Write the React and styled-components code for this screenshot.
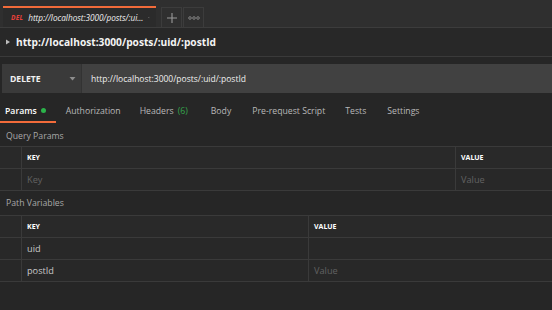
import React from 'react';
import styled, { createGlobalStyle } from 'styled-components';

const GlobalStyle = createGlobalStyle`
  html, body {
    margin: 0;
    padding: 0;
    background: #262626;
    font-family: "Open Sans", "Liberation Sans", sans-serif;
    overflow: hidden;
  }
`;

const Page = styled.div`
  width: 552px;
  height: 310px;
  background: #262626;
  color: #d8d8d8;
`;

const TabBar = styled.div`
  display: flex;
  align-items: flex-end;
  height: 28px;
  padding-left: 3px;
  background: #2f2f2f;
  border-bottom: 1px solid #3c3c3c;
  box-sizing: border-box;
`;

const ActiveTab = styled.div`
  display: flex;
  align-items: center;
  width: 153px;
  height: 21px;
  box-sizing: border-box;
  border-top: 2px solid #f26b3a;
  background: #2b2b2b;
  padding: 0 6px 0 8px;
  gap: 5px;
`;

const MethodBadge = styled.span`
  color: #e8403a;
  font-size: 6.5px;
  font-weight: 700;
  font-style: italic;
  letter-spacing: 0.3px;
`;

const TabTitle = styled.span`
  flex: 1;
  color: #f0f0f0;
  font-size: 8.2px;
  font-style: italic;
  white-space: nowrap;
`;

const TabButton = styled.div`
  display: flex;
  align-items: center;
  justify-content: center;
  width: 21px;
  height: 20px;
  margin-left: ${(p) => p.gap}px;
  border: 1px solid #3c3c3c;
  border-bottom: none;
  box-sizing: border-box;
  color: #9a9a9a;
`;

const UrlHeader = styled.div`
  display: flex;
  align-items: center;
  gap: 5px;
  height: 29px;
  padding-left: 5px;
  border-bottom: 1px solid #3a3a3a;
  box-sizing: border-box;
  background: #282828;
`;

const UrlHeading = styled.span`
  color: #f4f4f4;
  font-size: 10.2px;
  font-weight: 700;
`;

const RequestBar = styled.div`
  display: flex;
  height: 29px;
  margin: 7px 0 0 2px;
`;

const MethodSelect = styled.div`
  display: flex;
  align-items: center;
  justify-content: space-between;
  width: 80px;
  padding: 0 5px 0 8px;
  box-sizing: border-box;
  background: #3a3a3a;
  border-right: 1px solid #333;
  color: #f0f0f0;
  font-size: 8.6px;
  font-weight: 700;
`;

const UrlInput = styled.div`
  flex: 1;
  display: flex;
  align-items: center;
  padding-left: 9px;
  background: #414141;
  color: #efefef;
  font-size: 8.5px;
`;

const ReqTabs = styled.div`
  display: flex;
  height: 23px;
  margin-top: 7px;
`;

const ReqTab = styled.div`
  display: flex;
  align-items: center;
  gap: 4px;
  padding: 0 ${(p) => p.pr}px 0 ${(p) => p.pl}px;
  font-size: 8.7px;
  color: ${(p) => (p.active ? '#ffffff' : '#b8b8b8')};
  font-weight: ${(p) => (p.active ? 600 : 400)};
  border-bottom: 2px solid ${(p) => (p.active ? '#f26b3a' : 'transparent')};
  box-sizing: border-box;
`;

const Dot = styled.span`
  width: 5px;
  height: 5px;
  border-radius: 50%;
  background: #2bb34a;
`;

const Count = styled.span`
  color: #35a74d;
`;

const SectionTitle = styled.div`
  height: ${(p) => p.h}px;
  display: flex;
  align-items: center;
  padding: ${(p) => p.pt}px 0 0 6px;
  box-sizing: border-box;
  font-size: 8.7px;
  color: #a8a8a8;
`;

const Table = styled.div`
  display: grid;
  grid-template-columns: 22px ${(p) => p.keyWidth}px 1fr;
  border-top: 1px solid #3a3a3a;
`;

const Cell = styled.div`
  height: 21px;
  display: flex;
  align-items: center;
  padding-left: 5px;
  border-bottom: 1px solid #3a3a3a;
  border-right: ${(p) => (p.last ? 'none' : '1px solid #3a3a3a')};
  font-size: ${(p) => (p.head ? '7px' : '9.2px')};
  font-weight: ${(p) => (p.head ? 700 : 400)};
  color: ${(p) => (p.head ? '#ffffff' : p.muted ? '#626262' : '#c8c8c8')};
  background: ${(p) => (p.head ? '#292929' : '#282828')};
`;

const Caret = () => (
  <svg width="6" height="6" viewBox="0 0 6 6">
    <path d="M1 0.5 L5 3 L1 5.5 Z" fill="#bdbdbd" />
  </svg>
);

const DownCaret = () => (
  <svg width="7" height="5" viewBox="0 0 7 5">
    <path d="M0.5 1 L6.5 1 L3.5 4.5 Z" fill="#8d8d8d" />
  </svg>
);

const Close = () => (
  <svg width="9" height="9" viewBox="0 0 9 9">
    <path d="M1 1 L8 8 M8 1 L1 8" stroke="#c8c8c8" strokeWidth="1.1" />
  </svg>
);

const Plus = () => (
  <svg width="10" height="10" viewBox="0 0 10 10">
    <path d="M5 0 V10 M0 5 H10" stroke="#9a9a9a" strokeWidth="1.1" />
  </svg>
);

const More = () => (
  <svg width="12" height="4" viewBox="0 0 12 4">
    <circle cx="2" cy="2" r="1.3" fill="none" stroke="#8a8a8a" strokeWidth="0.9" />
    <circle cx="6" cy="2" r="1.3" fill="none" stroke="#8a8a8a" strokeWidth="0.9" />
    <circle cx="10" cy="2" r="1.3" fill="none" stroke="#8a8a8a" strokeWidth="0.9" />
  </svg>
);

const tabs = [
  { label: 'Params', pl: 5, pr: 10, active: true },
  { label: 'Authorization', pl: 10, pr: 10 },
  { label: 'Headers', pl: 9, pr: 12, count: '(6)' },
  { label: 'Body', pl: 11, pr: 10 },
  { label: 'Pre-request Script', pl: 11, pr: 10 },
  { label: 'Tests', pl: 10, pr: 11 },
  { label: 'Settings', pl: 10, pr: 10 },
];

const App = () => {
  return (
    <Page>
      <GlobalStyle />
      <TabBar>
        <ActiveTab>
          <MethodBadge>DEL</MethodBadge>
          <TabTitle>http://localhost:3000/posts/:ui...</TabTitle>
          <Close />
        </ActiveTab>
        <TabButton gap={5}>
          <Plus />
        </TabButton>
        <TabButton gap={1}>
          <More />
        </TabButton>
      </TabBar>

      <UrlHeader>
        <Caret />
        <UrlHeading>http://localhost:3000/posts/:uid/:postId</UrlHeading>
      </UrlHeader>

      <RequestBar>
        <MethodSelect>
          DELETE
          <DownCaret />
        </MethodSelect>
        <UrlInput>http://localhost:3000/posts/:uid/:postId</UrlInput>
      </RequestBar>

      <ReqTabs>
        {tabs.map((t) => (
          <ReqTab key={t.label} pl={t.pl} pr={t.pr} active={t.active}>
            {t.label}
            {t.active && <Dot />}
            {t.count && <Count>{t.count}</Count>}
          </ReqTab>
        ))}
      </ReqTabs>

      <SectionTitle h={23} pt={2}>Query Params</SectionTitle>
      <Table keyWidth={434}>
        <Cell head />
        <Cell head>KEY</Cell>
        <Cell head last>VALUE</Cell>
        <Cell />
        <Cell muted>Key</Cell>
        <Cell muted last>Value</Cell>
      </Table>

      <SectionTitle h={24} pt={0}>Path Variables</SectionTitle>
      <Table keyWidth={287}>
        <Cell head />
        <Cell head>KEY</Cell>
        <Cell head last>VALUE</Cell>
        <Cell />
        <Cell>uid</Cell>
        <Cell last />
        <Cell />
        <Cell>postId</Cell>
        <Cell muted last>Value</Cell>
      </Table>
    </Page>
  );
};

export default App;
